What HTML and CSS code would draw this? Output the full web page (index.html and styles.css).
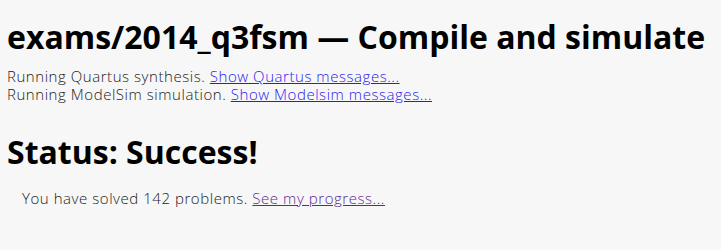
FILE: index.html
```html
<!DOCTYPE html>
<html>
<head>
<meta charset="utf-8">
<link rel="stylesheet" href="styles.css">
</head>
<body>
<h1 class="title">exams/2014_q3fsm — Compile and simulate</h1>
<div class="log">
<div>Running Quartus synthesis. <a class="link" href="#q">Show Quartus messages...</a></div>
<div>Running ModelSim simulation. <a class="link" href="#m">Show Modelsim messages...</a></div>
</div>
<h2 class="status">Status: Success!</h2>
<p class="solved">You have solved 142 problems. <a class="link visited" href="#p">See my progress...</a></p>
</body>
</html>
```
FILE: styles.css
```css
html, body {
  background: #f7f7f7;
}
body {
  margin: 0;
  padding: 0 7px;
  font-family: "Open Sans", "Liberation Sans", sans-serif;
  font-weight: 300;
  font-size: 15px;
  letter-spacing: 0.55px;
  color: #222;
}
.title {
  font-family: "Open Sans", sans-serif;
  font-weight: 700;
  font-size: 32px;
  line-height: 44px;
  letter-spacing: 0;
  margin: 15px 0 8px 0;
  color: #000;
}
.log {
  line-height: 18px;
}
.link {
  color: #2a1aee;
}
.link.visited {
  color: #5a2a90;
}
.status {
  font-family: "Open Sans", sans-serif;
  font-weight: 700;
  font-size: 32px;
  line-height: 44px;
  letter-spacing: 0;
  margin: 27px 0 14px 0;
  color: #000;
}
.solved {
  margin: 0;
  padding-left: 15px;
}
```
